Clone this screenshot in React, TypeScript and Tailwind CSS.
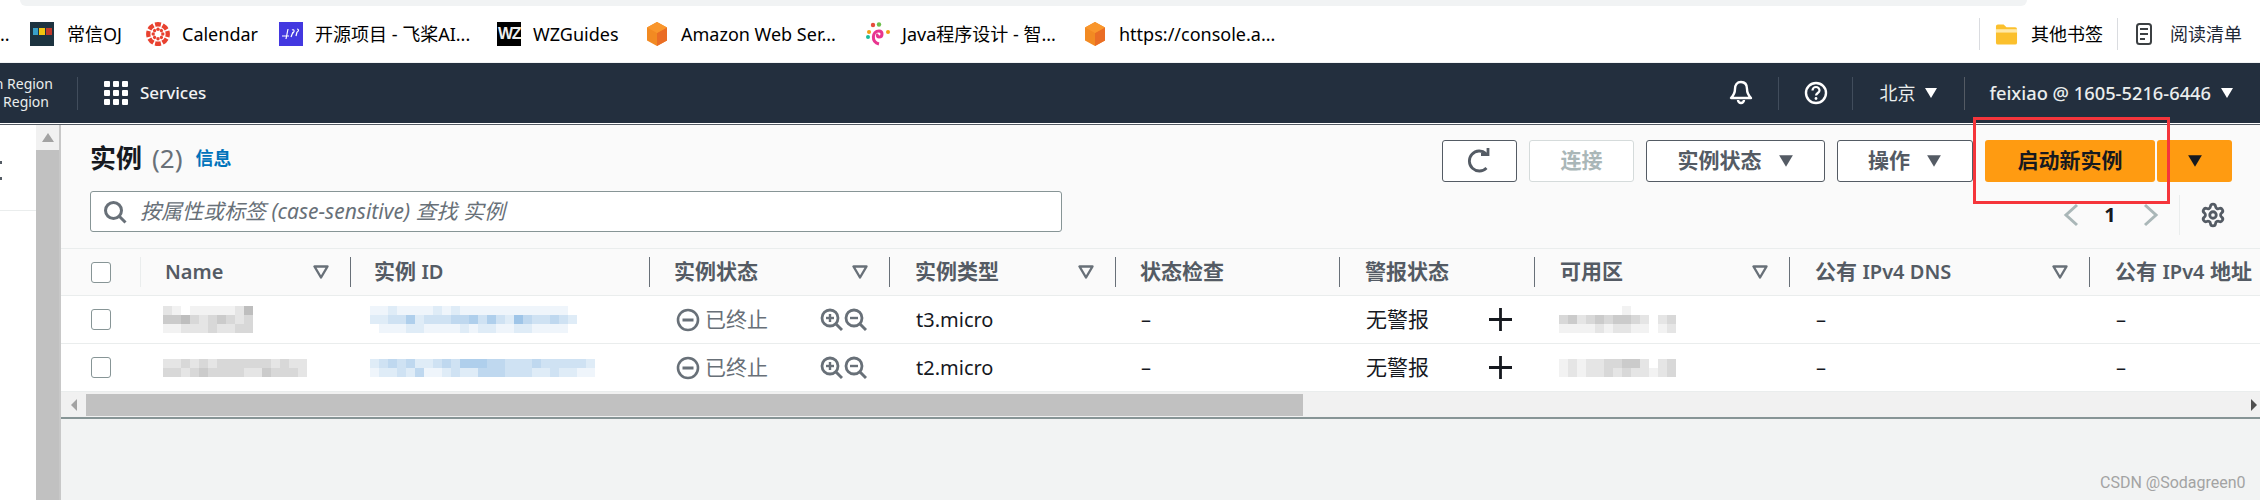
import React from "react";
import { Settings } from "lucide-react";

const Caret = ({ c = "#ffffff", w = 14, h = 12 }: { c?: string; w?: number; h?: number }) => (
  <svg width={w} height={h} viewBox="0 0 14 12" className="shrink-0"><path d="M1 1h12L7 11z" fill={c} /></svg>
);

const FilterIcon = () => (
  <svg width={16} height={14} viewBox="0 0 16 14" className="shrink-0"><path d="M1.5 1.5h13L8 12.5z" fill="none" stroke="#687078" strokeWidth={2.4} strokeLinejoin="round" /></svg>
);

const Mosaic = ({ rows, rgb, cell = 9 }: { rows: string[]; rgb: string; cell?: number }) => (
  <svg width={rows[0].length * cell} height={rows.length * cell} className="shrink-0 block">
    {rows.map((r, y) =>
      r.split("").map((d, x) => (
        <rect key={x + "-" + y} x={x * cell} y={y * cell} width={cell} height={cell} fill={rgb} fillOpacity={Number(d) / 9} />
      ))
    )}
  </svg>
);

const Checkbox = () => <div className="w-[20px] h-[21px] border border-[#879596] rounded-[3px] bg-white shrink-0" />;

const Sep = ({ light }: { light?: boolean }) => (
  <div className={"w-px h-[30px] shrink-0 " + (light ? "bg-[#eaeded]" : "bg-[#687078]")} />
);

const CubeIcon = () => (
  <svg width={24} height={24} viewBox="0 0 24 24" className="shrink-0">
    <path d="M12 0l10 5.5v13L12 24 2 18.5v-13z" fill="#f28a22" />
    <path d="M12 11l10-5.5v13L12 24z" fill="#ea6d25" />
    <path d="M12 0l10 5.5L12 11 2 5.5z" fill="#f9962c" />
  </svg>
);

const StatusIcon = () => (
  <svg width={24} height={24} viewBox="0 0 24 24" className="shrink-0">
    <circle cx={12} cy={12} r={10} fill="none" stroke="#687078" strokeWidth={2.6} />
    <rect x={6.5} y={10.5} width={11} height={3} fill="#687078" />
  </svg>
);

const ZoomIcon = ({ plus }: { plus?: boolean }) => (
  <svg width={23} height={24} viewBox="0 0 23 24" className="shrink-0">
    <circle cx={10} cy={10} r={8} fill="none" stroke="#687078" strokeWidth={2.8} />
    <path d="M16 16l6 6" stroke="#687078" strokeWidth={3} />
    <rect x={6} y={8.8} width={8} height={2.4} fill="#687078" />
    {plus && <rect x={8.8} y={6} width={2.4} height={8} fill="#687078" />}
  </svg>
);

const PlusIcon = () => (
  <svg width={23} height={23} viewBox="0 0 23 23" className="shrink-0"><path d="M11.5 0v23M0 11.5h23" stroke="#16191f" strokeWidth={2.8} /></svg>
);

const font = "font-['Noto_Sans','Noto_Sans_CJK_SC',sans-serif]";

function Row({ name, id, type, az }: { name: string[]; id: string[]; type: string; az: string[] }) {
  return (
    <div className="flex h-[48px] items-center bg-white border-b border-[#eaeded] text-[20px] text-[#16191f] w-[2260px]">
      <div className="w-[81px] pl-[30px] shrink-0"><Checkbox /></div>
      <div className="w-[210px] pl-[21px] shrink-0"><Mosaic rows={name} rgb="#8a8a8a" /></div>
      <div className="w-[299px] pl-[18px] shrink-0"><Mosaic rows={id} rgb="#6fa8dc" /></div>
      <div className="w-[240px] pl-[25px] pr-[24px] shrink-0 flex items-center">
        <StatusIcon />
        <span className="ml-[5px] text-[#687078] text-[21px] leading-none">已终止</span>
        <div className="ml-auto flex items-center gap-px"><ZoomIcon plus /><ZoomIcon /></div>
      </div>
      <div className="w-[226px] pl-[25px] shrink-0">{type}</div>
      <div className="w-[224px] pl-[24px] shrink-0">–</div>
      <div className="w-[195px] pl-[25px] pr-[24px] shrink-0 flex items-center justify-between">
        <span className="text-[21px] leading-none">无警报</span>
        <PlusIcon />
      </div>
      <div className="w-[255px] pl-[23px] shrink-0"><Mosaic rows={az} rgb="#8a8a8a" /></div>
      <div className="w-[300px] pl-[25px] shrink-0">–</div>
      <div className="pl-[25px] shrink-0">–</div>
    </div>
  );
}

export default function App() {
  return (
    <div className={"relative w-[2260px] h-[500px] overflow-hidden bg-white flex flex-col " + font}>
      {/* browser chrome */}
      <div className="h-[63px] shrink-0 bg-white flex flex-col border-b border-[#f1f3f4]">
        <div className="h-[6px] ml-[20px] w-[2007px] bg-[#f1f3f4] rounded-b-[10px] shrink-0" />
        <div className="flex-1 flex items-center text-[18px] text-black">
          <div className="w-[30px] shrink-0 leading-none">..</div>
          <div className="w-[116px] flex items-center gap-[13px] shrink-0">
            <div className="w-[24px] h-[24px] bg-[#1d3340] flex items-start justify-center gap-[1px] pt-[6px] shrink-0">
              <div className="w-[5px] h-[7px] bg-[#39a0c8]" /><div className="w-[6px] h-[7px] bg-[#f1c40f]" /><div className="w-[6px] h-[7px] bg-[#c0392b]" />
            </div>
            <span>常信OJ</span>
          </div>
          <div className="w-[133px] flex items-center gap-[12px] shrink-0">
            <svg width={24} height={24} viewBox="0 0 24 24" className="shrink-0">
              {[0, 45, 90, 135, 180, 225, 270, 315].map((a) => (
                <g key={a} transform={`rotate(${a} 12 12)`}>
                  <path d="M8.6 0.6a12 12 0 016.8 0L14.4 4.8a8 8 0 00-4.8 0z" fill="#e8412f" />
                  <circle cx={12} cy={7.2} r={1.7} fill="#e8412f" />
                </g>
              ))}
            </svg>
            <span>Calendar</span>
          </div>
          <div className="w-[218px] flex items-center gap-[12px] shrink-0">
            <svg width={24} height={24} viewBox="0 0 24 24" className="shrink-0">
              <rect width={24} height={24} fill="#4338e0" />
              <path d="M3 14h7M9 7l-2 10M13 8c2-1 3 1 1 3M12 15l2-5M18 7c2 0 2 2 0 3M17 14l1-4" stroke="#fff" strokeWidth={1.2} fill="none" />
            </svg>
            <span>开源项目 - 飞桨AI...</span>
          </div>
          <div className="w-[148px] flex items-center gap-[12px] shrink-0">
            <div className="w-[24px] h-[24px] bg-black text-[#eeeeee] text-[16px] font-bold leading-none flex items-center justify-center tracking-[-1.5px] shrink-0 font-['Liberation_Sans',sans-serif]">WZ</div>
            <span>WZGuides</span>
          </div>
          <div className="w-[221px] flex items-center gap-[12px] shrink-0"><CubeIcon /><span>Amazon Web Ser...</span></div>
          <div className="w-[217px] flex items-center gap-[12px] shrink-0">
            <svg width={24} height={24} viewBox="0 0 24 24" className="shrink-0">
              <path d="M13 22C5 20 6 9 13 9c4 0 4 6 0 6-2 0-2-2-1-3" fill="none" stroke="#e8358f" strokeWidth={3} />
              <circle cx={7} cy={3} r={2.2} fill="#e74c3c" /><circle cx={13} cy={2.5} r={2.2} fill="#6cbf4b" />
              <circle cx={3} cy={10} r={2} fill="#f39c12" /><circle cx={2} cy={15} r={2} fill="#1abc9c" /><circle cx={22} cy={10} r={2} fill="#f39c12" />
            </svg>
            <span>Java程序设计 - 智...</span>
          </div>
          <div className="flex items-center gap-[12px] shrink-0"><CubeIcon /><span>https://console.a...</span></div>
          <div className="ml-auto flex items-center shrink-0 pr-[18px]">
            <div className="w-px h-[32px] bg-[#dadce0]" />
            <svg width={23} height={24} viewBox="0 0 24 24" className="ml-[15px] shrink-0">
              <path d="M1 4a2 2 0 012-2h6l3 3h9a2 2 0 012 2v14a2 2 0 01-2 2H3a2 2 0 01-2-2z" fill="#fbc02d" />
              <rect x={1} y={7} width={22} height={3.5} fill="#ffe9a8" />
            </svg>
            <span className="ml-[13px]">其他书签</span>
            <div className="w-px h-[32px] bg-[#dadce0] ml-[14px]" />
            <svg width={16} height={24} viewBox="0 0 16 24" className="ml-[18px] shrink-0">
              <rect x={1} y={2} width={14} height={20} rx={2.5} fill="none" stroke="#3c4043" strokeWidth={2} />
              <path d="M4 7h8M4 12h8M4 17h5" stroke="#3c4043" strokeWidth={2} />
            </svg>
            <span className="ml-[18px] text-[#1f2937]">阅读清单</span>
          </div>
        </div>
      </div>

      {/* console nav */}
      <div className="h-[60px] shrink-0 bg-[#232f3e] flex items-center text-white">
        <div className="w-[53px] shrink-0 text-[14px] leading-[18px] text-right whitespace-nowrap text-[#eaeded] flex flex-col items-end overflow-hidden">
          <span>n Region</span>
          <span className="pr-[4px]">Region</span>
        </div>
        <div className="w-px h-[33px] bg-[#414d5c] ml-[24px] shrink-0" />
        <div className="ml-[26px] grid grid-cols-3 gap-[3px] shrink-0">
          {Array.from({ length: 9 }).map((_, i) => (
            <div key={i} className="w-[6px] h-[6px] bg-white rounded-[1px]" />
          ))}
        </div>
        <span className="ml-[12px] text-[17px] font-medium text-[#f2f3f3]">Services</span>
        <div className="ml-auto flex items-center">
          <svg width={24} height={26} viewBox="0 0 24 26" className="shrink-0">
            <path d="M12 2c-4 0-6 3-6 7 0 4-2 7-4 9h20c-2-2-4-5-4-9 0-4-2-7-6-7z" fill="none" stroke="#fff" strokeWidth={2.4} strokeLinejoin="round" />
            <path d="M9 20a3 3 0 006 0" fill="none" stroke="#fff" strokeWidth={2.4} />
          </svg>
          <div className="w-px h-[33px] bg-[#414d5c] ml-[25px]" />
          <svg width={24} height={24} viewBox="0 0 24 24" className="ml-[25px] shrink-0">
            <circle cx={12} cy={12} r={10} fill="none" stroke="#fff" strokeWidth={2.4} />
            <path d="M8.5 9.5a3.5 3.5 0 117 0c0 2.4-3.5 2.6-3.5 5" fill="none" stroke="#fff" strokeWidth={2.2} />
            <circle cx={12} cy={17.5} r={1.4} fill="#fff" />
          </svg>
          <div className="w-px h-[33px] bg-[#414d5c] ml-[24px]" />
          <span className="ml-[26px] text-[18px] text-[#eaeded]">北京</span>
          <div className="ml-[9px]"><Caret /></div>
          <div className="w-px h-[33px] bg-[#545b64] ml-[26px]" />
          <span className="ml-[24px] text-[18.3px] font-medium text-[#eaeded]">feixiao @ 1605-5216-6446</span>
          <div className="ml-[9px] mr-[26px]"><Caret /></div>
        </div>
      </div>
      <div className="h-[2px] shrink-0 bg-white border-b border-[#545b64]" />

      {/* main */}
      <div className="flex-1 flex min-h-0">
        <div className="w-[36px] shrink-0 bg-white pt-[36px] flex flex-col">
          <div className="w-[2px] h-[3px] bg-[#545b64]" />
          <div className="w-[2px] h-[3px] bg-[#545b64] mt-[13px]" />
          <div className="h-px bg-[#eaeded] mt-[30px]" />
        </div>
        <div className="w-[23px] shrink-0 bg-[#f1f1f1] flex flex-col items-center">
          <div className="h-[25px] flex items-center justify-center"><svg width={12} height={9} viewBox="0 0 12 9"><path d="M6 0l6 9H0z" fill="#a3a3a3" /></svg></div>
          <div className="w-full flex-1 bg-[#c1c1c1]" />
        </div>
        <div className="flex-1 min-w-0 flex flex-col border-l-2 border-[#c8c8c8] bg-[#f2f3f3] overflow-hidden">
          {/* header */}
          <div className="h-[123px] shrink-0 bg-[#fafafa] flex justify-between pl-[29px] pr-[28px]">
            <div className="flex flex-col w-[972px]">
              <div className="h-[66px] flex items-center gap-[10px] pt-[2px] pb-[2px]">
                <span className="text-[26px] font-bold text-[#16191f]">实例</span>
                <span className="text-[26px] text-[#687078]">(2)</span>
                <span className="text-[18px] font-bold text-[#0073bb] ml-[3px]">信息</span>
              </div>
              <div className="h-[41px] bg-white border border-[#879596] rounded-[3px] flex items-center pl-[12px]">
                <svg width={24} height={24} viewBox="0 0 24 24" className="shrink-0">
                  <circle cx={10.5} cy={10.5} r={8} fill="none" stroke="#687078" strokeWidth={3} />
                  <path d="M16.5 16.5l6 6" stroke="#687078" strokeWidth={3} />
                </svg>
                <span className="ml-[13px] text-[21px] italic text-[#687078]">按属性或标签 (case-sensitive) 查找 实例</span>
              </div>
            </div>
            <div className="flex flex-col items-end">
              <div className="flex items-center gap-[12px] mt-[15px] text-[21px] font-bold text-[#545b64]">
                <div className="w-[75px] h-[42px] border border-[#545b64] rounded-[3px] bg-white flex items-center justify-center">
                  <svg width={26} height={26} viewBox="0 0 26 26"><path d="M19 5.5A10 10 0 1019.5 20" fill="none" stroke="#545b64" strokeWidth={2.8} /><path d="M14 6.5h7V0" fill="none" stroke="#545b64" strokeWidth={2.8} /></svg>
                </div>
                <div className="w-[105px] h-[42px] border border-[#d5dbdb] rounded-[3px] bg-white flex items-center justify-center text-[#aab7b8]">连接</div>
                <div className="w-[179px] h-[42px] border border-[#545b64] rounded-[3px] bg-white flex items-center justify-center gap-[16px]">实例状态<Caret c="#545b64" w={16} h={14} /></div>
                <div className="w-[136px] h-[42px] border border-[#545b64] rounded-[3px] bg-white flex items-center justify-center gap-[16px]">操作<Caret c="#545b64" w={16} h={14} /></div>
                <div className="flex gap-[2px]">
                  <div className="w-[170px] h-[42px] bg-[#ff9b11] rounded-[3px] flex items-center justify-center text-[#16191f]">启动新实例</div>
                  <div className="w-[75px] h-[42px] bg-[#ff9b11] rounded-[3px] flex items-center justify-center"><Caret c="#16191f" w={16} h={14} /></div>
                </div>
              </div>
              <div className="flex items-center mt-[13px] h-[40px] pr-[6px]">
                <svg width={16} height={24} viewBox="0 0 16 24"><path d="M14 2L3 12l11 10" fill="none" stroke="#aab7b8" strokeWidth={3} /></svg>
                <span className="ml-[24px] w-[14px] text-[20px] font-bold text-[#16191f] text-center">1</span>
                <svg width={16} height={24} viewBox="0 0 16 24" className="ml-[26px]"><path d="M2 2l11 10L2 22" fill="none" stroke="#aab7b8" strokeWidth={3} /></svg>
                <div className="w-px h-[40px] bg-[#eaeded] ml-[20px]" />
                <Settings size={26} strokeWidth={2.6} color="#545b64" className="ml-[20px] shrink-0" />
              </div>
            </div>
          </div>

          {/* table */}
          <div className="shrink-0 border-t border-[#eaeded] overflow-hidden">
            <div className="flex h-[47px] items-center bg-[#fafafa] border-b border-[#eaeded] text-[21px] font-bold text-[#545b64] w-[2260px] whitespace-nowrap">
              <div className="w-[80px] pl-[30px] shrink-0 flex items-center justify-between"><Checkbox /><Sep light /></div>
              <div className="w-[210px] pl-[24px] shrink-0 flex items-center justify-between"><span className="text-[20px] font-semibold">Name</span><div className="flex items-center gap-[21px]"><FilterIcon /><Sep /></div></div>
              <div className="w-[299px] pl-[23px] shrink-0 flex items-center justify-between"><span>实例 <span className="text-[20px] font-semibold">ID</span></span><Sep /></div>
              <div className="w-[240px] pl-[24px] shrink-0 flex items-center justify-between"><span>实例状态</span><div className="flex items-center gap-[21px]"><FilterIcon /><Sep /></div></div>
              <div className="w-[226px] pl-[25px] shrink-0 flex items-center justify-between"><span>实例类型</span><div className="flex items-center gap-[21px]"><FilterIcon /><Sep /></div></div>
              <div className="w-[224px] pl-[24px] shrink-0 flex items-center justify-between"><span>状态检查</span><Sep /></div>
              <div className="w-[195px] pl-[25px] shrink-0 flex items-center justify-between"><span>警报状态</span><Sep /></div>
              <div className="w-[255px] pl-[25px] shrink-0 flex items-center justify-between"><span>可用区</span><div className="flex items-center gap-[21px]"><FilterIcon /><Sep /></div></div>
              <div className="w-[300px] pl-[25px] shrink-0 flex items-center justify-between"><span>公有 <span className="text-[20px] font-semibold">IPv4 DNS</span></span><div className="flex items-center gap-[21px]"><FilterIcon /><Sep /></div></div>
              <div className="pl-[25px] shrink-0"><span>公有 <span className="text-[20px] font-semibold">IPv4</span> 地址</span></div>
            </div>
            <Row
              type="t3.micro"
              name={["2101111125", "4453234323", "1122232233"]}
              id={["11211112121111111111110", "22335233344535326433432", "01112211112122112211110"]}
              az={["0000000100000", "3423434432023", "1111212211012"]}
            />
            <Row
              type="t2.micro"
              name={["2232323333332322", "3323433332243332"]}
              id={["2343422343555443334333332", "1223241123224443332232211"]}
              az={["1212233442023", "1212232322123"]}
            />
          </div>
          {/* scrollbar */}
          <div className="h-[25px] shrink-0 bg-[#f1f1f1] flex items-stretch pt-[2px] pb-px">
            <div className="w-[25px] shrink-0 flex items-center justify-center"><svg width={6} height={12} viewBox="0 0 6 12"><path d="M6 0v12L0 6z" fill="#a3a3a3" /></svg></div>
            <div className="w-[1217px] bg-[#c1c1c1] shrink-0" />
            <div className="flex-1 flex items-center justify-end pr-[3px]"><svg width={6} height={12} viewBox="0 0 6 12"><path d="M0 0v12l6-6z" fill="#505050" /></svg></div>
          </div>
          <div className="h-[2px] shrink-0 bg-[#879596]" />
          <div className="flex-1 bg-[#f2f3f3]" />
        </div>
      </div>

      {/* annotation and watermark over the picture */}
      <div className="absolute left-[1973px] top-[117px] w-[197px] h-[87px] border-[3px] border-[#f5353b]" />
      <div className="absolute left-[2100px] top-[471px] text-[16px] text-[#a3a3a3] font-['Roboto',sans-serif] whitespace-nowrap">CSDN @Sodagreen0</div>
    </div>
  );
}
